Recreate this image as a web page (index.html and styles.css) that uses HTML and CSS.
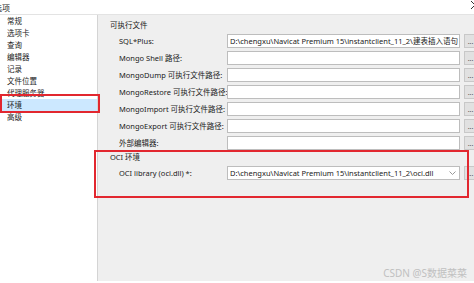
FILE: index.html
```html
<!DOCTYPE html>
<html>
<head>
  <title>选项</title>
  <link rel="stylesheet" href="styles.css">
</head>
<body>
  <div class="window">
    <div class="titlebar">
      <span class="title">选项</span>
      <svg class="close" width="10" height="10" viewBox="0 0 10 10">
        <path d="M1 1 L9 9 M9 1 L1 9" stroke="#333" stroke-width="1" fill="none"/>
      </svg>
    </div>
    <div class="main">
      <ul class="nav">
        <li>常规</li>
        <li>选项卡</li>
        <li>查询</li>
        <li>编辑器</li>
        <li>记录</li>
        <li>文件位置</li>
        <li>代理服务器</li>
        <li class="selected">环境</li>
        <li>高级</li>
      </ul>
      <div class="panel">
        <div class="group">
          <div class="group-title">可执行文件</div>
          <div class="row">
            <label>SQL*Plus:</label>
            <div class="field">D:\chengxu\Navicat Premium 15\instantclient_11_2\建表插入语句</div>
            <button>...</button>
          </div>
          <div class="row">
            <label>Mongo Shell 路径:</label>
            <div class="field"></div>
            <button>...</button>
          </div>
          <div class="row">
            <label>MongoDump 可执行文件路径:</label>
            <div class="field"></div>
            <button>...</button>
          </div>
          <div class="row">
            <label>MongoRestore 可执行文件路径:</label>
            <div class="field"></div>
            <button>...</button>
          </div>
          <div class="row">
            <label>MongoImport 可执行文件路径:</label>
            <div class="field"></div>
            <button>...</button>
          </div>
          <div class="row">
            <label>MongoExport 可执行文件路径:</label>
            <div class="field"></div>
            <button>...</button>
          </div>
          <div class="row">
            <label>外部编辑器:</label>
            <div class="field"></div>
            <button>...</button>
          </div>
        </div>
        <div class="group group-oci">
          <div class="group-title">OCI 环境</div>
          <div class="row">
            <label>OCI library (oci.dll) *:</label>
            <div class="field combo">
              <span class="combo-text">D:\chengxu\Navicat Premium 15\instantclient_11_2\oci.dll</span>
              <svg width="7" height="4" viewBox="0 0 7 4">
                <path d="M0.5 0.5 L3.5 3.5 L6.5 0.5" stroke="#999" stroke-width="1" fill="none"/>
              </svg>
            </div>
            <button>...</button>
          </div>
        </div>
      </div>
    </div>
    <div class="mark mark-nav"></div>
    <div class="mark mark-oci"></div>
    <div class="watermark">CSDN @S数据菜菜</div>
  </div>
</body>
</html>
```

FILE: styles.css
```css
body {
  margin: 0;
  overflow: hidden;
  background: #ffffff;
  font-family: "Noto Sans", "Noto Sans CJK SC", sans-serif;
  font-size: 7.5px;
  color: #1a1a1a;
}
.window {
  position: relative;
  width: 474px;
  height: 283px;
  overflow: hidden;
}
.titlebar {
  height: 14px;
  border-bottom: 1px solid #e3e3e3;
  display: flex;
  align-items: center;
  justify-content: space-between;
}
.title {
  margin-left: -6px;
  font-size: 8px;
}
.close {
  margin-right: -6px;
  margin-top: -4px;
}
.main {
  display: flex;
  height: 266px;
}
.nav {
  list-style: none;
  margin: 0;
  padding: 0;
  width: 97px;
}
.nav li {
  height: 12px;
  line-height: 12px;
  padding-left: 7px;
}
.nav li.selected {
  background: #cce8ff;
}
.panel {
  flex: 1;
  background: #efefef;
  border-left: 1px solid #d4d4d4;
  padding: 5px 0 0 12px;
}
.group {
  display: flex;
  flex-direction: column;
  gap: 3px;
}
.group-oci {
  margin-top: 2px;
}
.group-title {
  height: 11px;
  line-height: 11px;
}
.row {
  display: grid;
  grid-template-columns: 108px 233px 13px;
  height: 14px;
  padding-left: 9px;
  align-items: center;
}
.row label {
  white-space: nowrap;
  line-height: 14px;
}
.field {
  height: 14px;
  box-sizing: border-box;
  background: #ffffff;
  border: 1px solid #bdbdbd;
  padding-left: 2px;
  line-height: 12px;
  white-space: nowrap;
  overflow: hidden;
  position: relative;
  z-index: 1;
}
.combo {
  display: flex;
  align-items: center;
  gap: 6px;
  padding-right: 3px;
}
.combo-text {
  flex: 1;
  overflow: hidden;
}
.row button {
  height: 14px;
  width: 13px;
  margin-left: 4px;
  box-sizing: border-box;
  padding: 0;
  background: #e1e1e1;
  border: 1px solid #c8c8c8;
  font-family: inherit;
  font-size: 7px;
  line-height: 9px;
  color: #555;
}
.mark {
  position: absolute;
  box-sizing: border-box;
  border: 2px solid #e2272f;
  z-index: 2;
}
.mark-nav {
  left: 0;
  top: 94px;
  width: 100px;
  height: 19px;
}
.mark-oci {
  left: 94px;
  top: 150px;
  width: 375px;
  height: 48px;
}
.watermark {
  position: absolute;
  right: 7px;
  bottom: 3px;
  color: #c0c0c0;
  font-size: 10px;
}
```
